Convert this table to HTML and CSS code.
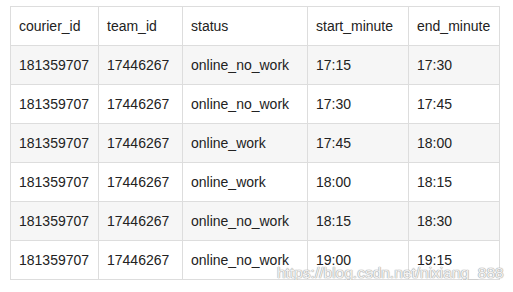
FILE: index.html
```html
<!DOCTYPE html>
<html>
<head>
<meta charset="utf-8">
<link rel="stylesheet" href="styles.css">
</head>
<body>
<div class="wrap">
  <table class="data">
    <colgroup>
      <col class="c1"><col class="c2"><col class="c3"><col class="c4"><col class="c5">
    </colgroup>
    <thead>
      <tr><th>courier_id</th><th>team_id</th><th>status</th><th>start_minute</th><th>end_minute</th></tr>
    </thead>
    <tbody>
      <tr><td>181359707</td><td>17446267</td><td>online_no_work</td><td>17:15</td><td>17:30</td></tr>
      <tr><td>181359707</td><td>17446267</td><td>online_no_work</td><td>17:30</td><td>17:45</td></tr>
      <tr><td>181359707</td><td>17446267</td><td>online_work</td><td>17:45</td><td>18:00</td></tr>
      <tr><td>181359707</td><td>17446267</td><td>online_work</td><td>18:00</td><td>18:15</td></tr>
      <tr><td>181359707</td><td>17446267</td><td>online_no_work</td><td>18:15</td><td>18:30</td></tr>
      <tr><td>181359707</td><td>17446267</td><td>online_no_work</td><td>19:00</td><td>19:15</td></tr>
    </tbody>
  </table>
  <div class="watermark">https://blog.csdn.net/nixiang_888</div>
</div>
</body>
</html>
```
FILE: styles.css
```css
html, body {
  margin: 0;
  padding: 0;
  background: #fff;
}
.wrap {
  position: relative;
  padding: 6px 0 0 10px;
  font-family: "Liberation Sans", Arial, sans-serif;
  font-size: 14px;
  color: #222;
}
.data {
  border-collapse: collapse;
  table-layout: fixed;
  width: 490px;
}
.c1 { width: 88px; }
.c2 { width: 84px; }
.c3 { width: 125px; }
.c4 { width: 101px; }
.c5 { width: 91px; }
.data th,
.data td {
  border: 1px solid #ddd;
  padding: 8px 8px;
  line-height: 22px;
  text-align: left;
  font-weight: normal;
  white-space: nowrap;
}
.data tbody tr:nth-child(odd) {
  background: #f6f6f6;
}
.watermark {
  position: absolute;
  left: 277px;
  top: 264px;
  font-size: 15.5px;
  line-height: 18px;
  color: #f2f2f2;
  text-shadow: 0 0 1px #a8a8a8, 0 0 1px #a8a8a8, 0 0 1px #a8a8a8;
  white-space: nowrap;
}
```
